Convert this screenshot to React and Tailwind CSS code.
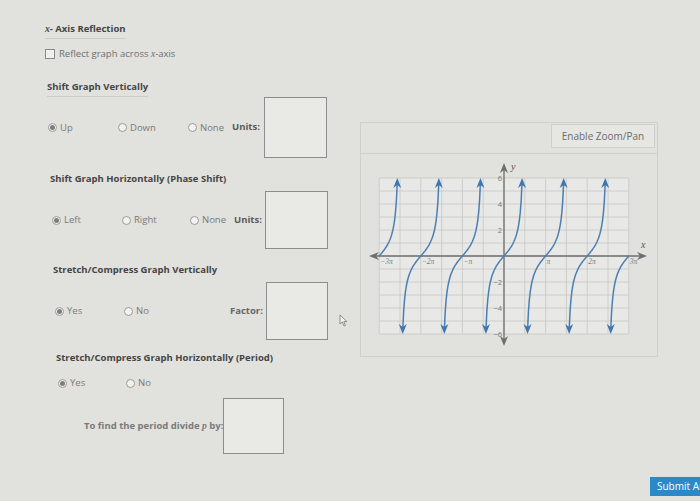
import React from 'react';

const FONT = { fontFamily: '"Open Sans", "Noto Sans", sans-serif' };
const MATH = { fontFamily: '"Liberation Serif", "DejaVu Serif", serif' };

const Radio = ({ checked, label, className = '' }) => (
  <div className={`flex items-center gap-[3px] h-[14px] ${className}`}>
    <span className="w-[9px] h-[9px] rounded-full border border-[#9a9a9a] bg-[#f2f2ef] flex items-center justify-center">
      {checked && <span className="w-[5px] h-[5px] rounded-full bg-[#7d7d7d]" />}
    </span>
    <span className="text-[9.5px] text-[#7a7a7a] leading-[14px]">{label}</span>
  </div>
);

const Heading = ({ children, className = '', underline = false }) => (
  <div className={`flex ${className}`}>
    <span
      className={`block text-[9.5px] font-bold text-[#454545] leading-[14px] pb-[2px] whitespace-nowrap ${
        underline ? 'border-b border-[#cdcdc8]' : 'border-b border-transparent'
      }`}
    >
      {children}
    </span>
  </div>
);

const Box = ({ className = '' }) => (
  <div className={`shrink-0 border-[1.5px] border-[#8c8c8c] bg-[#e9e9e6] ${className}`} />
);

// y = 1.2 tan(x), drawn in local svg units
const OX = 143;
const OY = 102;
const PI = 41.6;
const YU = 13;

const branchPath = (k) => {
  const lim = Math.atan(5.7 / 1.2);
  let a = k * Math.PI - lim;
  let b = k * Math.PI + lim;
  a = Math.max(a, -3 * Math.PI);
  b = Math.min(b, 3 * Math.PI);
  const pts = [];
  const n = 40;
  for (let i = 0; i <= n; i++) {
    const t = a + ((b - a) * i) / n;
    const y = 1.2 * Math.tan(t);
    pts.push([OX + (t / Math.PI) * PI, OY - y * YU]);
  }
  return pts;
};

const Graph = () => {
  const vLines = [];
  for (let i = -6; i <= 6; i++) vLines.push(OX + (i * PI) / 2);
  const hLines = [];
  for (let j = -6; j <= 6; j++) hLines.push(OY - j * YU);
  const branches = [-3, -2, -1, 0, 1, 2, 3].map(branchPath);
  const xl = ['-3π', '-2π', '-π', '', 'π', '2π', '3π'];
  return (
    <svg width="296" height="202" viewBox="0 0 296 202">
      <rect x={OX - 3 * PI} y={OY - 6 * YU} width={6 * PI} height={12 * YU} fill="#e8e9e6" />
      {vLines.map((x, i) => (
        <line key={'v' + i} x1={x} y1={OY - 6 * YU} x2={x} y2={OY + 6 * YU} stroke="#c6c6c3" strokeWidth="0.8" />
      ))}
      {hLines.map((y, i) => (
        <line key={'h' + i} x1={OX - 3 * PI} y1={y} x2={OX + 3 * PI} y2={y} stroke="#c6c6c3" strokeWidth="0.8" />
      ))}
      {/* axes */}
      <line x1="12" y1={OY} x2="282" y2={OY} stroke="#6e6e6e" strokeWidth="1.3" />
      <polygon points={`8,${OY} 18,${OY - 4} 15,${OY} 18,${OY + 4}`} fill="#6e6e6e" />
      <polygon points={`286,${OY} 276,${OY - 4} 279,${OY} 276,${OY + 4}`} fill="#6e6e6e" />
      <line x1={OX} y1="13" x2={OX} y2="188" stroke="#6e6e6e" strokeWidth="1.3" />
      <polygon points={`${OX},9 ${OX - 4},19 ${OX},16 ${OX + 4},19`} fill="#6e6e6e" />
      <polygon points={`${OX},192 ${OX - 4},182 ${OX},185 ${OX + 4},182`} fill="#6e6e6e" />
      <text x={OX + 7} y="16" fontSize="10" fontStyle="italic" fill="#555" style={MATH}>y</text>
      <text x="280" y={OY - 8} fontSize="10" fontStyle="italic" fill="#555" style={MATH}>x</text>
      {[6, 4, 2, -2, -4, -6].map((v) => (
        <text key={v} x={OX - 2} y={OY - v * YU + 3} fontSize="7.5" textAnchor="end" fill="#7a7a7a" style={FONT}>
          {v < 0 ? '−' + -v : v}
        </text>
      ))}
      {xl.map((l, i) =>
        l ? (
          <text key={l} x={OX + (i - 3) * PI + 1} y={OY + 8} fontSize="7.5" fontStyle="italic" fill="#7a7a7a" style={MATH}>
            {l.replace('-', '−')}
          </text>
        ) : null
      )}
      {/* curves */}
      {branches.map((pts, i) => (
        <polyline
          key={'b' + i}
          points={pts.map((p) => p.join(',')).join(' ')}
          fill="none"
          stroke="#4b7fb4"
          strokeWidth="1.5"
        />
      ))}
      {branches.map((pts, i) => {
        const first = pts[0];
        const last = pts[pts.length - 1];
        const out = [];
        if (first[1] > OY + 40) {
          out.push(
            <polygon
              key={'d' + i}
              points={`${first[0]},${first[1] + 4} ${first[0] - 4},${first[1] - 6} ${first[0]},${first[1] - 3} ${first[0] + 4},${first[1] - 6}`}
              fill="#3f76b0"
            />
          );
        }
        if (last[1] < OY - 40) {
          out.push(
            <polygon
              key={'u' + i}
              points={`${last[0]},${last[1] - 4} ${last[0] - 4},${last[1] + 6} ${last[0]},${last[1] + 3} ${last[0] + 4},${last[1] + 6}`}
              fill="#3f76b0"
            />
          );
        }
        return out;
      })}
    </svg>
  );
};

export default function App() {
  return (
    <div className="relative w-[700px] h-[501px] overflow-hidden bg-[#e1e1dd] flex flex-col" style={FONT}>
      <div className="flex flex-1">
        {/* left form */}
        <div className="w-[360px] shrink-0 flex flex-col pt-[22px]">
          <Heading className="ml-[45px]" underline>
            <i style={MATH} className="font-bold">x</i>- Axis Reflection
          </Heading>
          <div className="ml-[45px] mt-[8px] flex items-center gap-[4px] h-[14px]">
            <span className="w-[10px] h-[10px] border border-[#8a8a8a] bg-[#f0f0ed]" />
            <span className="text-[9.5px] text-[#6f6f6f] leading-[14px]">
              Reflect graph across <i style={MATH}>x</i>-axis
            </span>
          </div>

          <Heading className="ml-[47px] mt-[19px]" underline>
            Shift Graph Vertically
          </Heading>
          <div className="ml-[48px] flex items-center">
            <Radio checked label="Up" className="w-[70px]" />
            <Radio label="Down" className="w-[70px]" />
            <Radio label="None" className="w-[44px]" />
            <span className="w-[32px] text-[9.5px] font-bold text-[#5a5a5a]">Units:</span>
            <Box className="w-[63px] h-[61px]" />
          </div>

          <Heading className="ml-[50px] mt-[14px]">Shift Graph Horizontally (Phase Shift)</Heading>
          <div className="ml-[52px] mt-[2px] flex items-center">
            <Radio checked label="Left" className="w-[70px]" />
            <Radio label="Right" className="w-[68px]" />
            <Radio label="None" className="w-[44px]" />
            <span className="w-[31px] text-[9.5px] font-bold text-[#5a5a5a]">Units:</span>
            <Box className="w-[63px] h-[58px]" />
          </div>

          <Heading className="ml-[53px] mt-[14px]">Stretch/Compress Graph Vertically</Heading>
          <div className="ml-[55px] mt-[2px] flex items-center">
            <Radio checked label="Yes" className="w-[69px]" />
            <Radio label="No" className="w-[106px]" />
            <span className="w-[36px] text-[9.5px] font-bold text-[#666]">Factor:</span>
            <Box className="w-[62px] h-[58px]" />
          </div>

          <Heading className="ml-[56px] mt-[11px]">Stretch/Compress Graph Horizontally (Period)</Heading>
          <div className="ml-[58px] mt-[8px] flex items-center">
            <Radio checked label="Yes" className="w-[68px]" />
            <Radio label="No" />
          </div>
          <div className="ml-[84px] mt-[8px] flex items-center">
            <span className="w-[139px] text-[9.5px] font-bold text-[#7a7a7a] whitespace-nowrap">
              To find the period divide <i style={MATH}>p</i> by:
            </span>
            <Box className="w-[61px] h-[56px]" />
          </div>
        </div>

        {/* graph panel */}
        <div className="pt-[122px]">
          <div className="w-[298px] h-[235px] border border-[#cfcfcb] flex flex-col">
            <div className="h-[31px] flex items-start justify-end pr-[2px] pt-[1px] border-b border-[#cfcfcb]">
              <div className="w-[104px] h-[24px] border border-[#cfcfcb] bg-[#e6e6e3] flex items-center justify-center text-[10px] text-[#6d6d6d]">
                Enable Zoom/Pan
              </div>
            </div>
            <Graph />
          </div>
        </div>
      </div>

      {/* footer */}
      <div className="h-[26px] flex items-start pl-[650px] pt-[2px]">
        <div className="shrink-0 h-[19px] px-[7px] bg-[#2a89c8] flex items-center text-[10px] text-white whitespace-nowrap">
          Submit Answer
        </div>
      </div>

      {/* mouse pointer */}
      <svg className="absolute left-[339px] top-[314px]" width="9" height="13" viewBox="0 0 9 13">
        <path d="M1 1 L1 10 L3.3 8 L5 12 L6.4 11.4 L4.8 7.6 L8 7.6 Z" fill="#f2f2f0" stroke="#777" strokeWidth="0.8" />
      </svg>
    </div>
  );
}
